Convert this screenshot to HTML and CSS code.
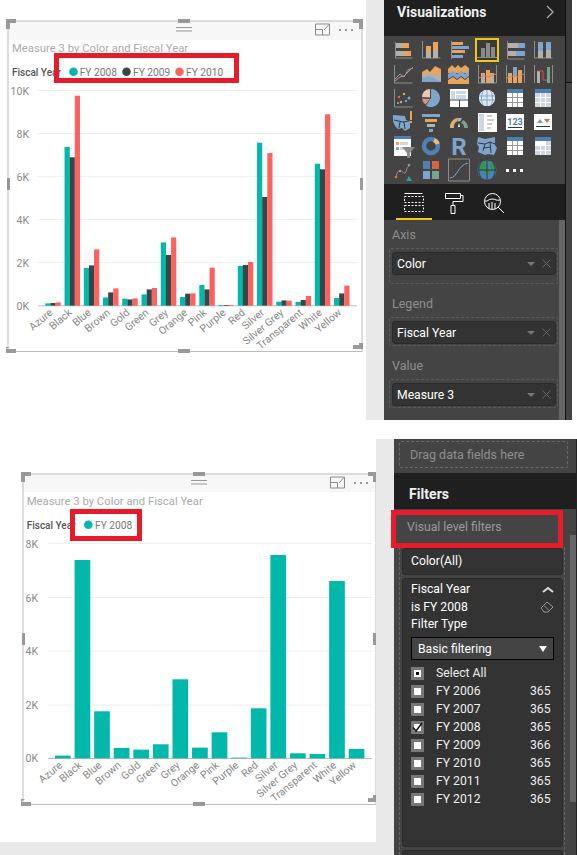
FILE: index.html
```html
<!DOCTYPE html>
<html lang="en">
<head>
<meta charset="utf-8">
<title>Legend and filter comparison</title>
<link rel="stylesheet" href="styles.css">
</head>
<body>
<section class="shot shot-top">
  <div class="canvas">
    <svg class="chart" width="366" height="420" viewBox="0 0 366 420">
      <rect class="frame-head" x="8" y="21" width="354" height="19"/>
      <rect class="frame" x="8" y="21" width="354" height="330.5"/>
      <g class="grip"><path d="M176 27.5h16M176 31h16"/></g>
      <g class="focus"><path d="M315.500 26v9h14V24h-14v2M315.500 29.500h7v5.500M324 30l5-5.500"/></g>
      <g class="more"><circle cx="340" cy="30" r="1"/><circle cx="346" cy="30" r="1"/><circle cx="352" cy="30" r="1"/></g>
      <path class="handle" d="M6 19h10v4H10v6H6zM353 19h10v10h-4v-6h-6zM6 349h10v4H6v-6h4zM178 19h12v4h-12zM178 349h12v4h-12zM7 178h3v12H7zM360 178h3v12h-3zM353 349h10v-6h-4v2h-6z"/>
      <text class="title" x="12" y="52">Measure 3 by Color and Fiscal Year</text>
      <text class="legend-name" x="12" y="75.500">Fiscal Year</text>
      <rect class="callout" x="56.500" y="55.500" width="180" height="25"/>
      <circle class="c1" cx="73.500" cy="71.700" r="4.300"/><text class="legend" x="79.700" y="75.500">FY 2008</text>
      <circle class="c2" cx="126.500" cy="71.700" r="4.300"/><text class="legend" x="133" y="75.500">FY 2009</text>
      <circle class="c3" cx="179.500" cy="71.700" r="4.300"/><text class="legend" x="186" y="75.500">FY 2010</text>
      <path class="grid" d="M38 90.500h319M38 133.500h319M38 176.500h319M38 219.500h319M38 262.500h319"/>
      <path class="base" d="M38 305.800h319"/>
      <g class="axis"><text x="29" y="94.500">10K</text><text x="29" y="137.500">8K</text><text x="29" y="180.500">6K</text><text x="29" y="223.500">4K</text><text x="29" y="266.500">2K</text><text x="29" y="309.500">0K</text></g>
      <g transform="translate(45.3,305.7)"><rect class="a" y="-2.3" height="2.3"/><rect class="b" y="-2.7" height="2.7"/><rect class="d" y="-3.3" height="3.3"/><text class="cat" transform="translate(8,8) rotate(-40)">Azure</text></g>
      <g transform="translate(64.55,305.7)"><rect class="a" y="-158.7" height="158.7"/><rect class="b" y="-148.4" height="148.4"/><rect class="d" y="-210" height="210"/><text class="cat" transform="translate(8,8) rotate(-40)">Black</text></g>
      <g transform="translate(83.8,305.7)"><rect class="a" y="-37.7" height="37.7"/><rect class="b" y="-40.3" height="40.3"/><rect class="d" y="-56.3" height="56.3"/><text class="cat" transform="translate(8,8) rotate(-40)">Blue</text></g>
      <g transform="translate(103.05,305.7)"><rect class="a" y="-8.3" height="8.3"/><rect class="b" y="-13.3" height="13.3"/><rect class="d" y="-17.3" height="17.3"/><text class="cat" transform="translate(8,8) rotate(-40)">Brown</text></g>
      <g transform="translate(122.3,305.7)"><rect class="a" y="-7" height="7"/><rect class="b" y="-6.3" height="6.3"/><rect class="d" y="-7.3" height="7.3"/><text class="cat" transform="translate(8,8) rotate(-40)">Gold</text></g>
      <g transform="translate(141.55,305.7)"><rect class="a" y="-11.3" height="11.3"/><rect class="b" y="-16.3" height="16.3"/><rect class="d" y="-17.7" height="17.7"/><text class="cat" transform="translate(8,8) rotate(-40)">Green</text></g>
      <g transform="translate(160.8,305.7)"><rect class="a" y="-63.3" height="63.3"/><rect class="b" y="-50.7" height="50.7"/><rect class="d" y="-68.3" height="68.3"/><text class="cat" transform="translate(8,8) rotate(-40)">Grey</text></g>
      <g transform="translate(180.05,305.7)"><rect class="a" y="-8.7" height="8.7"/><rect class="b" y="-12" height="12"/><rect class="d" y="-12.3" height="12.3"/><text class="cat" transform="translate(8,8) rotate(-40)">Orange</text></g>
      <g transform="translate(199.3,305.7)"><rect class="a" y="-20.7" height="20.7"/><rect class="b" y="-16.3" height="16.3"/><rect class="d" y="-38" height="38"/><text class="cat" transform="translate(8,8) rotate(-40)">Pink</text></g>
      <g transform="translate(218.55,305.7)"><rect class="a" y="-.7" height=".7"/><rect class="b" y="-.7" height=".7"/><rect class="d" y="-.7" height=".7"/><text class="cat" transform="translate(8,8) rotate(-40)">Purple</text></g>
      <g transform="translate(237.8,305.7)"><rect class="a" y="-39.7" height="39.7"/><rect class="b" y="-40.7" height="40.7"/><rect class="d" y="-43.7" height="43.7"/><text class="cat" transform="translate(8,8) rotate(-40)">Red</text></g>
      <g transform="translate(257.05,305.7)"><rect class="a" y="-163" height="163"/><rect class="b" y="-108.7" height="108.7"/><rect class="d" y="-152.7" height="152.7"/><text class="cat" transform="translate(8,8) rotate(-40)">Silver</text></g>
      <g transform="translate(276.3,305.7)"><rect class="a" y="-4" height="4"/><rect class="b" y="-5.3" height="5.3"/><rect class="d" y="-5" height="5"/><text class="cat" transform="translate(8,8) rotate(-40)">Silver Grey</text></g>
      <g transform="translate(295.55,305.7)"><rect class="a" y="-3.7" height="3.7"/><rect class="b" y="-5.7" height="5.7"/><rect class="d" y="-9.7" height="9.7"/><text class="cat" transform="translate(8,8) rotate(-40)">Transparent</text></g>
      <g transform="translate(314.8,305.7)"><rect class="a" y="-142" height="142"/><rect class="b" y="-136.4" height="136.4"/><rect class="d" y="-191.4" height="191.4"/><text class="cat" transform="translate(8,8) rotate(-40)">White</text></g>
      <g transform="translate(334.05,305.7)"><rect class="a" y="-7.7" height="7.7"/><rect class="b" y="-12.3" height="12.3"/><rect class="d" y="-20" height="20"/><text class="cat" transform="translate(8,8) rotate(-40)">Yellow</text></g>
    </svg>
  </div>
  <div class="strip"></div>
  <aside class="viz">
    <div class="viz-main">
      <header class="viz-head"><span class="heading">Visualizations</span>
        <svg class="chev" width="10" height="14" viewBox="0 0 10 14"><path d="M2 1l6 6-6 6"/></svg></header>
      <div class="icons">
        <svg viewBox="0 0 24 24"><path class="ax" d="M4.500 4v16h17"/><path class="or" d="M11 5h7v5h-7zM13 13h7v5h-7z"/><path class="gy" d="M5 5h6v5H5zM5 13h8v5H5z"/></svg>
        <svg viewBox="0 0 24 24"><path class="ax" d="M3.500 3v17h18"/><path class="gy" d="M7 14h5v6H7zM14 12h5v8h-5z"/><path class="or" d="M7 8h5v6H7zM14 4h5v8h-5z"/></svg>
        <svg viewBox="0 0 24 24"><path class="ax" d="M4.500 3v18"/><path class="or" d="M5 4h11v3H5zM5 12h13v3H5z"/><path class="bl" d="M5 8h17v3H5zM5 17h11v3H5z"/></svg>
        <svg class="selected" viewBox="0 0 24 24"><path class="ax" d="M2 19.500h20"/><path class="dk" d="M6 10h4v9H6zM11 5h4v14h-4zM16 9h4v10h-4z"/></svg>
        <svg viewBox="0 0 24 24"><path class="ax" d="M4.500 3v18h17"/><path class="gy" d="M5 5h10v5H5zM5 13h8v5H5z"/><path class="bl" d="M15 5h7v5h-7zM13 13h9v5h-9z"/></svg>
        <svg viewBox="0 0 24 24"><path class="ax" d="M3.500 3v17h18"/><path class="bl" d="M7 4h5v9H7zM15 4h5v8h-5z"/><path class="gy" d="M7 13h5v7H7zM15 12h5v8h-5z"/></svg>

        <svg viewBox="0 0 24 24"><path class="ax" d="M3.500 3v18h18"/><path class="ln-bl" d="M4 17l5-5 4 3 4-7 5-2"/><path class="ln-or" d="M4 19l5-4 4-1 4-4 5-5"/></svg>
        <svg viewBox="0 0 24 24"><path class="or" d="M3 10l5-3 3 3 5-6 6 3v7H3z"/><path class="gy" d="M3 14l5-4 5 3 9-1v8H3z"/><path class="bl" d="M3 16l8-2 11 6H3z"/></svg>
        <svg viewBox="0 0 24 24"><path class="or" d="M1 7l4-4 3 3 3-3 3 3 4-3 4 3v5H1z"/><path class="bl" d="M1 12l5-3 4 3 4-3 4 3 4-3v5l-4 3-4-3-4 3-4-3-5 3z"/><path class="or" d="M1 18l5-3 4 3 4-3 4 3 4-3v7H1z"/></svg>
        <svg viewBox="0 0 24 24"><path class="ax" d="M3.500 3v18h18M21.500 3v18"/><path class="gy" d="M6 14h4v7H6zM15 15h4v6h-4z"/><path class="or" d="M11 8h4v13h-4zM6 11h4v3H6zM15 11h4v4h-4z"/><path class="ln-or" d="M4 16l5-2 5 1 7-3"/></svg>
        <svg viewBox="0 0 24 24"><path class="ax" d="M3.500 3v18M21.500 3v18"/><path class="or" d="M5 11h4v10H5zM15 8h4v13h-4z"/><path class="bl" d="M10 5h4v9h-4z"/><path class="or" d="M10 14h4v7h-4z"/><path class="ln-or" d="M4 16l5-2 5 1 7-3"/></svg>
        <svg viewBox="0 0 24 24"><path class="ax" d="M3.500 3v18M21.500 3v18"/><path class="gy" d="M6 9h3v12H6z"/><path class="gn" d="M16 5h3v16h-3z"/><path class="ln-rd" d="M7 9h5v9h4"/></svg>

        <svg viewBox="0 0 24 24"><path class="ax" d="M3.500 3v18h18"/><circle class="rd" cx="8" cy="11" r="1.200"/><circle class="or" cx="13" cy="8" r="1.200"/><circle class="bl" cx="18" cy="12" r="1.500"/><circle class="gy" cx="10" cy="16" r="1.200"/><circle class="bl" cx="15" cy="15" r="1.200"/><circle class="or" cx="7" cy="17" r="1"/></svg>
        <svg viewBox="0 0 24 24"><path class="bl" d="M12 3a9 9 0 1 1-5 16.500L12 12z"/><path class="pk" d="M11 11.500L3 11a8 8 0 0 1 8-8z"/><path class="rdl" d="M11 13l-4.500 5.500A8 8 0 0 1 3 12.500z"/></svg>
        <svg viewBox="0 0 24 24"><path class="wh" d="M3 3h18v18H3z"/><path class="lb" d="M9 5h10v3H9zM9 9h10v4H9zM4 5h4v8H4z"/><path class="dkf" d="M3 13.500h18v1H3zM12 14h1v7h-1z"/></svg>
        <svg viewBox="0 0 24 24"><circle class="wh" cx="12" cy="12" r="8"/><circle class="glb" cx="12" cy="12" r="8"/><path class="ln-bl" d="M4 10h16M4 14h16M12 4v16M8 5c-2 4-2 10 0 14M16 5c2 4 2 10 0 14"/></svg>
        <svg viewBox="0 0 24 24"><path class="wh" d="M4 3h16v18H4z"/><path class="tb" d="M4 3h16v4H4z"/><path class="ln-gy" d="M4 11.500h16M4 16.500h16M9.500 7v14M14.500 7v14"/></svg>
        <svg viewBox="0 0 24 24"><path class="lg" d="M4 3h16v18H4z"/><path class="tb" d="M4 3h16v4H4z"/><path class="ln-wh" d="M4 11.500h16M4 16.500h16M9.500 7v14M14.500 7v14"/></svg>

        <svg viewBox="0 0 24 24"><path class="bl" d="M2 5l12 1 1 4 4 1v7l-5 3-3-3-4 1-3-3-2-5z"/><path class="ln-dk" d="M3 10l9 2 6-1M9 12l-1 6M13 12l1 7"/><path class="or" d="M19 1h2v9h-2zM19 11h2v2h-2z"/></svg>
        <svg viewBox="0 0 24 24"><path class="bl" d="M3 4h18v3H3z"/><path class="or" d="M6 9h12v3H6z"/><path class="gy" d="M8 14h8v3H8z"/><path class="bl" d="M10 19h4v3h-4z"/></svg>
        <svg viewBox="0 0 24 24"><path class="or2" d="M3 18a9 9 0 0 1 7-10l.5 3.200A5.500 5.500 0 0 0 7 18z"/><path class="gn" d="M16 10a9 9 0 0 1 5 8h-4a5 5 0 0 0-3-5z"/><path class="gy" d="M10 8h5l-1.500 3.200h-3z"/><path class="wh" d="M11 17l1-4 1 4z"/></svg>
        <svg viewBox="0 0 24 24"><path class="wh" d="M3 3h19v19H3z"/><path class="lg" d="M4 4h5v17H4z"/><path class="ln-gy" d="M12 6h5M12 10h7M12 14h5M12 18h4"/></svg>
        <svg viewBox="0 0 24 24"><path class="wh" d="M3 4h18v16H3z"/><text class="ico-num" x="12" y="14.500">123</text><path class="ln-dk" d="M5 17.500h14"/></svg>
        <svg viewBox="0 0 24 24"><path class="wh" d="M3 4h18v16H3z"/><path class="gn" d="M6 13l3-4 3 4z"/><path class="rd" d="M13 9h6l-3 4z"/><path class="ln-dk" d="M5 16.500h14"/></svg>

        <svg viewBox="0 0 24 24"><path class="wh" d="M3 2h17v20H3z"/><path class="tb" d="M3 2h17v3H3z"/><path class="or" d="M5 8h3v3H5z"/><path class="bl" d="M5 13h3v3H5z"/><path class="lg" d="M9 8h8v3H9zM9 13h4v3H9z"/><path class="fil" d="M11 13h13l-5 6v5h-3v-5z"/></svg>
        <svg viewBox="0 0 24 24"><circle class="ring" cx="12" cy="12" r="7"/><path class="ring-or" d="M15 6a7 7 0 0 1 3.800 4"/></svg>
        <svg viewBox="0 0 24 24"><text class="ico-r" x="12" y="21">R</text></svg>
        <svg viewBox="0 0 24 24"><path class="bl" d="M3 3l7 2 10-2v8l2 3-3 7-6-1-3 1-7-3 1-5-2-3z"/><path class="ln-dk" d="M3 9l7 1 5-2 5 2M10 10l-2 7M15 8l1 11M8 14l8-1"/></svg>
        <svg viewBox="0 0 24 24"><path class="wh" d="M4 3h16v18H4z"/><path class="tb" d="M4 3h16v4H4z"/><path class="ln-gy" d="M4 11.500h16M4 16.500h16M9.500 7v14M14.500 7v14"/></svg>
        <svg viewBox="0 0 24 24"><path class="lg" d="M4 3h16v18H4z"/><path class="wh" d="M4 7h10v4H4z"/><path class="tb" d="M4 3h16v4H4z"/><path class="ln-wh" d="M4 11.500h16M4 16.500h16M9.500 7v14M14.500 7v14"/></svg>

        <svg viewBox="0 0 24 24"><path class="ln-pk" d="M4 20c2-1 1-7 5-7s3 3 5 2 1-6 4-7"/><circle class="rd" cx="5" cy="19" r="1.300"/><circle class="gy" cx="9" cy="13" r="1"/><circle class="gn" cx="18" cy="7" r="1.300"/><path class="tl" d="M15 23l3-5 3 5z"/></svg>
        <svg viewBox="0 0 24 24"><path class="bl2" d="M4 3h7v8H4z"/><path class="rd2" d="M13 3h7v8h-7z"/><path class="bl" d="M4 13h7v8H4z"/><path class="gn" d="M13 13h7v8h-7z"/></svg>
        <svg class="wide" viewBox="0 0 24 24"><path class="ax" d="M1.500 1v22h21V1z"/><path class="ln-bl" d="M3 20c7 0 8-13 18-15"/></svg>
        <svg viewBox="0 0 24 24"><circle class="bl2" cx="12" cy="12" r="9.500"/><path class="gn3" d="M4 7l5-3 3 3-2 3 4 1 1 4-4 2-2-4-5-2zM14 4l5 3 2 6-4-1-2-3z"/><path class="ln-dk" d="M3 12h18M12 3v18M6 5c-3 4-3 10 0 14M18 5c3 4 3 10 0 14"/></svg>
        <svg viewBox="0 0 24 24"><path class="wh" d="M3 11h3v3H3zM10 11h3v3h-3zM17 11h3v3h-3z"/></svg>
      </div>
      <nav class="tabs">
        <a class="tab tab-on"><svg width="22" height="22" viewBox="0 0 22 22"><path class="tab-ln" d="M1.500 1.500h18"/><path class="tab-dash" d="M1.500 4.500h19v6h-19zM1.500 13.500h19v6h-19z"/></svg></a>
        <a class="tab"><svg width="22" height="22" viewBox="0 0 22 22"><path class="tab-ln" d="M2.500 1.500h15v5h-15zM17.500 3.500h2.500v6H10v4M8 13.500h4v8H8z"/></svg></a>
        <a class="tab"><svg width="22" height="22" viewBox="0 0 22 22"><circle class="tab-ln" cx="9.500" cy="9.500" r="8"/><path class="tab-ln" d="M2 9c3 1 3-2 7-2s4 2 8 1M6 11v6M9 10v7.500M12 11v6M15 15l6 6"/></svg></a>
      </nav>
      <div class="fields">
        <h3 class="f-label">Axis</h3>
        <div class="well well-tall"><div class="chip"><span>Color</span><i class="arrow"></i><svg class="x" width="9" height="9" viewBox="0 0 9 9"><path d="M.5.500l8 8M8.500.500l-8 8"/></svg></div></div>
        <h3 class="f-label">Legend</h3>
        <div class="well"><div class="chip"><span>Fiscal Year</span><i class="arrow"></i><svg class="x" width="9" height="9" viewBox="0 0 9 9"><path d="M.5.500l8 8M8.500.500l-8 8"/></svg></div></div>
        <h3 class="f-label">Value</h3>
        <div class="well"><div class="chip"><span>Measure 3</span><i class="arrow"></i><svg class="x" width="9" height="9" viewBox="0 0 9 9"><path d="M.5.500l8 8M8.500.500l-8 8"/></svg></div></div>
        <div class="sb"></div>
      </div>
    </div>
    <div class="viz-side"><div class="side-a"></div><div class="side-b"></div></div>
  </aside>
</section>
<div class="spacer"></div>
<section class="shot shot-bottom">
  <div class="canvas2">
    <div class="canvas2-white">
      <svg class="chart" width="376" height="403" viewBox="0 439 376 403">
        <rect class="frame-head" x="23" y="474" width="353" height="18"/>
        <rect class="frame" x="23" y="474" width="353" height="330.500"/>
        <g class="grip"><path d="M191 480.500h16M191 484h16"/></g>
        <g class="focus"><path d="M330.500 479v9h14V477h-14v2M330.500 482.500h7v5.500M339 483l5-5.500"/></g>
        <g class="more"><circle cx="355" cy="483" r="1"/><circle cx="361" cy="483" r="1"/><circle cx="367" cy="483" r="1"/></g>
        <path class="handle" d="M21 472h10v4h-6v6h-4zM368 472h8v10h-3v-6h-5zM21 802h10v4H21v-7h4zM193 472h12v4h-12zM193 802h12v4h-12zM22 633h3v12h-3zM373 633h3v12h-3zM368 802h8v-7h-3v3h-5z"/>
        <text class="title" x="26.700" y="505">Measure 3 by Color and Fiscal Year</text>
        <text class="legend-name" x="26.700" y="528.500">Fiscal Year</text>
        <rect class="callout" x="72.500" y="511.500" width="67" height="27"/>
        <circle class="c1" cx="88.300" cy="524.700" r="4.300"/><text class="legend" x="95" y="528.500">FY 2008</text>
        <path class="grid" d="M48 543.500h324M48 597.500h324M48 651h324M48 705h324"/>
        <path class="base" d="M48 758.500h324"/>
        <g class="axis"><text x="38" y="547.500">8K</text><text x="38" y="601.500">6K</text><text x="38" y="654.700">4K</text><text x="38" y="708.700">2K</text><text x="38" y="762.300">0K</text></g>
        <g transform="translate(55,758.3)"><rect class="w" y="-2.7" height="2.7"/><text class="cat" transform="translate(8,8) rotate(-40)">Azure</text></g>
        <g transform="translate(74.58,758.3)"><rect class="w" y="-198.3" height="198.3"/><text class="cat" transform="translate(8,8) rotate(-40)">Black</text></g>
        <g transform="translate(94.16,758.3)"><rect class="w" y="-47" height="47"/><text class="cat" transform="translate(8,8) rotate(-40)">Blue</text></g>
        <g transform="translate(113.74,758.3)"><rect class="w" y="-10.3" height="10.3"/><text class="cat" transform="translate(8,8) rotate(-40)">Brown</text></g>
        <g transform="translate(133.32,758.3)"><rect class="w" y="-8.7" height="8.7"/><text class="cat" transform="translate(8,8) rotate(-40)">Gold</text></g>
        <g transform="translate(152.9,758.3)"><rect class="w" y="-14" height="14"/><text class="cat" transform="translate(8,8) rotate(-40)">Green</text></g>
        <g transform="translate(172.48,758.3)"><rect class="w" y="-79" height="79"/><text class="cat" transform="translate(8,8) rotate(-40)">Grey</text></g>
        <g transform="translate(192.06,758.3)"><rect class="w" y="-10.7" height="10.7"/><text class="cat" transform="translate(8,8) rotate(-40)">Orange</text></g>
        <g transform="translate(211.64,758.3)"><rect class="w" y="-26" height="26"/><text class="cat" transform="translate(8,8) rotate(-40)">Pink</text></g>
        <g transform="translate(231.22,758.3)"><rect class="w" y="-.7" height=".7"/><text class="cat" transform="translate(8,8) rotate(-40)">Purple</text></g>
        <g transform="translate(250.8,758.3)"><rect class="w" y="-50" height="50"/><text class="cat" transform="translate(8,8) rotate(-40)">Red</text></g>
        <g transform="translate(270.38,758.3)"><rect class="w" y="-203.3" height="203.3"/><text class="cat" transform="translate(8,8) rotate(-40)">Silver</text></g>
        <g transform="translate(289.96,758.3)"><rect class="w" y="-5" height="5"/><text class="cat" transform="translate(8,8) rotate(-40)">Silver Grey</text></g>
        <g transform="translate(309.54,758.3)"><rect class="w" y="-4.3" height="4.3"/><text class="cat" transform="translate(8,8) rotate(-40)">Transparent</text></g>
        <g transform="translate(329.12,758.3)"><rect class="w" y="-177.3" height="177.3"/><text class="cat" transform="translate(8,8) rotate(-40)">White</text></g>
        <g transform="translate(348.7,758.3)"><rect class="w" y="-9.3" height="9.3"/><text class="cat" transform="translate(8,8) rotate(-40)">Yellow</text></g>
      </svg>
    </div>
  </div>
  <div class="strip strip2"></div>
  <aside class="filters">
    <div class="drag"><div class="drag-box">Drag data fields here</div></div>
    <header class="filters-head"><span class="heading">Filters</span></header>
    <div class="filters-body">
      <div class="vlf">Visual level filters</div>
      <div class="vlf-mark"></div>
      <div class="filters-well">
        <div class="f-chip">Color(All)</div>
        <div class="f-card">
          <div class="f-row"><span>Fiscal Year</span>
            <svg class="up" width="12" height="7" viewBox="0 0 12 7"><path d="M1 6l5-4 5 4"/></svg></div>
          <div class="f-row"><span>is FY 2008</span>
            <svg class="eraser" width="14" height="12" viewBox="0 0 14 12"><path d="M1 7l6-6 6 5-5 5H4zM4 4.500l5 5"/></svg></div>
          <div class="f-type">Filter Type</div>
          <div class="select"><span>Basic filtering</span><i class="sel-arrow"></i></div>
          <ul class="opts">
            <li><i class="cb cb-some"></i><span class="o-all">Select All</span></li>
            <li><i class="cb"></i><span>FY 2006</span><b>365</b></li>
            <li><i class="cb"></i><span>FY 2007</span><b>365</b></li>
            <li><i class="cb"><svg width="11" height="11" viewBox="0 0 11 11"><path d="M1 5.500l3 3.500 6-8"/></svg></i><span>FY 2008</span><b>365</b></li>
            <li><i class="cb"></i><span>FY 2009</span><b>366</b></li>
            <li><i class="cb"></i><span>FY 2010</span><b>365</b></li>
            <li><i class="cb"></i><span>FY 2011</span><b>365</b></li>
            <li><i class="cb"></i><span>FY 2012</span><b>365</b></li>
          </ul>
        </div>
        <div class="f-card f-next"></div>
      </div>
      <div class="sb2"></div>
    </div>
  </aside>
</section>
</body>
</html>
```
FILE: styles.css
```css
* { box-sizing: border-box; }
html, body { margin: 0; padding: 0; background: #fff; }
body { width: 577px; height: 855px; overflow: hidden; font-family: Roboto, "Open Sans", sans-serif; }

.shot { display: flex; position: relative; }
.shot-top { height: 420px; }
.spacer { height: 19px; }
.shot-bottom { height: 416px; overflow: hidden; }

.canvas { width: 366px; background: #fff; }
.chart { display: block; overflow: visible; }
.strip { width: 18px; background: #e9e9e9; }
.strip2 { width: 18px; }

.canvas2 { width: 376px; background: #e9e9e9; }
.canvas2-white { height: 403px; background: #fff; }

/* chart parts */
.frame { fill: none; stroke: #bdbdbd; stroke-width: 1; }
.frame-head { fill: #f7f7f7; }
.grip path { stroke: #999; stroke-width: 1; fill: none; }
.focus path { stroke: #8a8a8a; stroke-width: 1; fill: none; }
.more circle { fill: #777; }
.handle { fill: #999; }
.title { font-size: 11.300px; fill: #aaa; }
.legend-name { font-size: 10px; font-weight: 500; fill: #555; }
.legend { font-size: 10.200px; fill: #777; }
.callout { fill: none; stroke: #e81b2b; stroke-width: 5; }
.grid { stroke: #eee; stroke-width: 1; fill: none; }
.base { stroke: #bbb; stroke-width: 1; fill: none; }
.axis text { font-size: 10.500px; fill: #888; text-anchor: end; }
.cat { font-size: 10.500px; fill: #888; text-anchor: end; }
.c1, .a, .w { fill: #01b8aa; }
.c2, .b { fill: #374649; }
.c3, .d { fill: #fd625e; }
.a { width: 5.200px; }
.b { width: 5.200px; x: 5.130px; }
.d { width: 5.200px; x: 10.260px; }
.w { width: 15.700px; }

/* visualizations panel */
.viz { width: 188px; display: flex; background: #3d3d3d; }
.viz-main { display: flex; flex-direction: column; border-right: 1px solid #111; width: 182px; }
.viz-head { flex: none; height: 36px; background: #1f1f1f; display: flex; align-items: center; justify-content: space-between; padding: 0 10px 12px 13px; }
.heading { font-size: 14px; font-weight: 700; color: #f0f0f0; letter-spacing: .05px; }
.chev path { fill: none; stroke: #aaa; stroke-width: 1.300; }
.viz-side { flex: 1; display: flex; flex-direction: column; }
.side-a { height: 83px; border-bottom: 1px solid #111; background: #3a3a3a; }
.side-b { flex: 1; background: #444; }

.icons { flex: none; height: 148px; background: #444; padding: 2px 0 0 7px; display: grid; grid-template-columns: repeat(6, 24px); grid-auto-rows: 24px; column-gap: 4px; }
.icons svg { width: 24px; height: 24px; display: block; overflow: visible; }
.icons .selected { outline: 2px solid #f2c80f; outline-offset: -2px; background: #3a3a3a; }
.icons svg path, .icons svg circle { stroke-width: 1; }
.ax { fill: none; stroke: #8d8d8d; }
.or { fill: #e8a35c; }
.or2 { fill: #dcb36d; }
.gy { fill: #b4b0aa; }
.bl { fill: #7fa5cc; }
.bl2 { fill: #4f81b5; }
.dk { fill: #8a8a8a; }
.dkf { fill: #444; }
.gn { fill: #74a58f; }
.rd { fill: #e26a4f; }
.rd2 { fill: #d9623f; }
.rdl { fill: #d89484; }
.pk { fill: #eccbb0; }
.wh { fill: #fff; }
.lb { fill: #c9d9ea; }
.lg { fill: #cfd6e0; }
.tb { fill: #4f7fb0; }
.fil { fill: #8a8a8a; }
.glb { fill: #dbe8f4; }
.tl { fill: #1fa596; }
.gn3 { fill: #2f9a4a; }
.ln-bl, .ln-or, .ln-rd, .ln-gy, .ln-wh, .ln-dk, .ln-pk { fill: none; }
.ln-bl { stroke: #7fa5cc; }
.ln-or { stroke: #e0826a; }
.ln-rd { stroke: #d9503f; }
.ln-gy { stroke: #999; }
.ln-wh { stroke: #fff; }
.ln-dk { stroke: #2f3a44; }
.ln-pk { stroke: #b9808a; }
.icons svg .ring { fill: none; stroke: #4f81b5; stroke-width: 4.500; }
.icons svg .ring-or { fill: none; stroke: #e3c07a; stroke-width: 4.500; }
.ico-num { font-size: 9px; font-weight: 700; fill: #4f7fb0; text-anchor: middle; }
.ico-r { font-size: 24px; font-weight: 700; fill: #7fa5cc; text-anchor: middle; }

.tabs { flex: none; height: 36px; background: #1f1f1f; display: flex; gap: 4px; padding-left: 12px; }
.tab { width: 36px; height: 36px; display: flex; justify-content: center; padding-top: 8px; }
.tab-on { border-bottom: 2px solid #f2c80f; }
.tab-ln { fill: none; stroke: #fff; stroke-width: 1; }
.tab-dash { fill: none; stroke: #fff; stroke-width: 1; stroke-dasharray: 2 1.500; }

.fields { flex: 1; background: #444; position: relative; padding: 6px 7px 0 5px; }
.f-label { margin: 0 0 4px; height: 18px; line-height: 18px; font-size: 12.500px; font-weight: 400; color: #8f8f8f; padding-left: 3px; }
.well { height: 29px; border: 1px dashed #5c5c5c; padding: 3px 1px 0 2px; margin-bottom: 11px; width: 169px; border-radius: 2px; }
.well-tall { height: 36px; }
.chip { height: 23px; background: #333; border: 1px solid #2a2a2a; border-radius: 3px; display: flex; align-items: center; padding: 0 4px; color: #fff; font-size: 12.200px; }
.chip span { flex: 1; }
.arrow { width: 0; height: 0; border: 4px solid transparent; border-top: 4px solid #777; border-bottom: 0; margin-right: 7px; }
.x path { stroke: #666; stroke-width: 1; fill: none; }
.sb { position: absolute; top: 0; bottom: 0; right: 0; width: 6px; background: #666; }

/* filters panel */
.filters { width: 183px; background: #444; border-right: 1px solid #222; display: flex; flex-direction: column; }
.drag { flex: none; height: 34px; padding: 2px 8px 0 5px; }
.drag-box { height: 27px; border: 1px dashed #6a6a6a; border-radius: 2px; font-size: 12.500px; color: #8f8f8f; line-height: 25px; padding-left: 10px; }
.filters-head { flex: none; height: 36px; background: #1f1f1f; display: flex; align-items: center; padding: 6px 0 0 15px; }
.filters-body { flex: none; position: relative; }
.vlf { height: 38px; line-height: 37px; font-size: 12.200px; color: #9a9a9a; padding-left: 13px; }
.vlf-mark { position: absolute; left: -3px; top: 1px; width: 172px; height: 38px; border: 5px solid #e81b2b; }
.filters-well { margin: 0 11px 0 5px; border-left: 1px dashed #666; border-right: 1px dashed #666; padding: 1px 1px 0 2px; display: flex; flex-direction: column; gap: 3px; }
.f-chip { flex: none; height: 27px; background: #333; border: 1px solid #2a2a2a; border-radius: 3px; color: #fff; font-size: 12.200px; line-height: 25px; padding-left: 8px; }
.f-card { flex: none; height: 269px; background: #333; border: 1px solid #2a2a2a; border-radius: 3px; color: #fff; font-size: 12.200px; padding: 1px 8px 0; }
.f-next { height: 20px; }
.f-row { height: 18px; display: flex; justify-content: space-between; align-items: center; }
.f-type { height: 17px; line-height: 17px; }
.up path { fill: none; stroke: #ddd; stroke-width: 2; }
.eraser path { fill: none; stroke: #999; stroke-width: 1; }
.select { height: 23px; margin: 4px 0; background: #444; border: 1px solid #000; display: flex; align-items: center; justify-content: space-between; padding: 0 6px; }
.sel-arrow { width: 0; height: 0; border: 4px solid transparent; border-top: 6px solid #fff; border-bottom: 0; }
.opts { list-style: none; margin: 0; padding: 0; }
.opts li { height: 18px; display: flex; align-items: center; font-size: 12.200px; color: #eee; }
.opts span { width: 94px; margin-left: 12px; }
.opts b { font-weight: 400; }
.cb { width: 13px; height: 13px; flex: none; border: 3px solid #777; background: #fff; position: relative; }
.cb svg { position: absolute; left: -2px; top: -2px; }
.cb svg path { fill: none; stroke: #111; stroke-width: 1.500; }
.cb-some::after { content: ""; position: absolute; left: 2px; top: 2px; width: 3px; height: 3px; background: #111; }
.sb2 { position: absolute; top: 26px; right: 0; height: 267px; width: 6px; background: #666; }
```
